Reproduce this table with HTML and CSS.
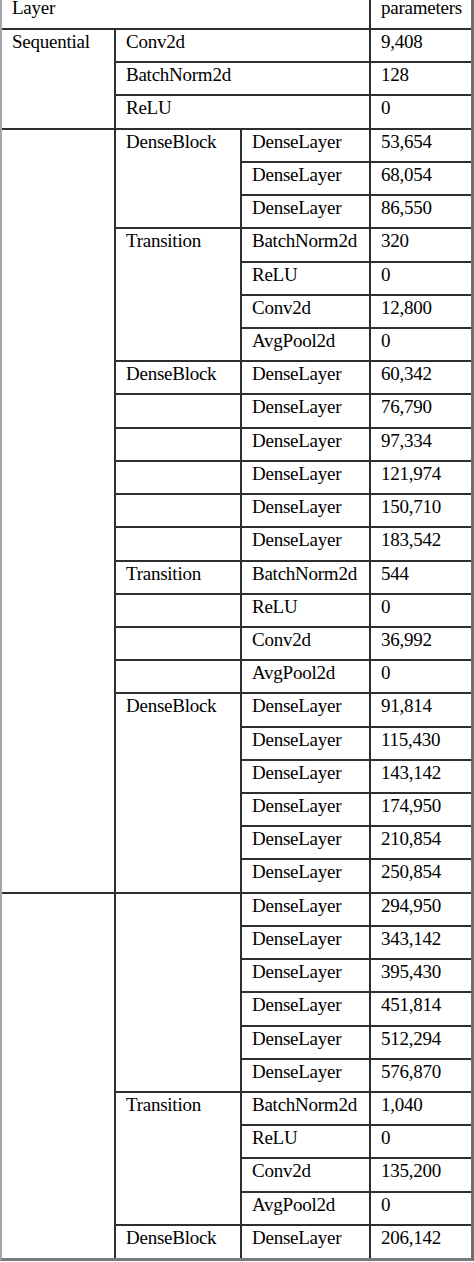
FILE: index.html
```html
<!DOCTYPE html>
<html>
<head>
<meta charset="utf-8">
<link rel="stylesheet" href="styles.css">
</head>
<body>
<div class="frame">
<table class="layers">
<colgroup><col class="c1"><col class="c2"><col class="c3"><col class="c4"></colgroup>
<tr class="head"><td colspan="3">Layer</td><td>parameters</td></tr>
<tr><td rowspan="3">Sequential</td><td colspan="2">Conv2d</td><td>9,408</td></tr>
<tr><td colspan="2">BatchNorm2d</td><td>128</td></tr>
<tr><td colspan="2">ReLU</td><td>0</td></tr>
<tr><td rowspan="23"></td><td rowspan="3">DenseBlock</td><td>DenseLayer</td><td>53,654</td></tr>
<tr><td>DenseLayer</td><td>68,054</td></tr>
<tr><td>DenseLayer</td><td>86,550</td></tr>
<tr><td rowspan="4">Transition</td><td>BatchNorm2d</td><td>320</td></tr>
<tr><td>ReLU</td><td>0</td></tr>
<tr><td>Conv2d</td><td>12,800</td></tr>
<tr><td>AvgPool2d</td><td>0</td></tr>
<tr><td>DenseBlock</td><td>DenseLayer</td><td>60,342</td></tr>
<tr><td></td><td>DenseLayer</td><td>76,790</td></tr>
<tr><td></td><td>DenseLayer</td><td>97,334</td></tr>
<tr><td></td><td>DenseLayer</td><td>121,974</td></tr>
<tr><td></td><td>DenseLayer</td><td>150,710</td></tr>
<tr><td></td><td>DenseLayer</td><td>183,542</td></tr>
<tr><td>Transition</td><td>BatchNorm2d</td><td>544</td></tr>
<tr><td></td><td>ReLU</td><td>0</td></tr>
<tr><td></td><td>Conv2d</td><td>36,992</td></tr>
<tr><td></td><td>AvgPool2d</td><td>0</td></tr>
<tr><td rowspan="6">DenseBlock</td><td>DenseLayer</td><td>91,814</td></tr>
<tr><td>DenseLayer</td><td>115,430</td></tr>
<tr><td>DenseLayer</td><td>143,142</td></tr>
<tr><td>DenseLayer</td><td>174,950</td></tr>
<tr><td>DenseLayer</td><td>210,854</td></tr>
<tr><td>DenseLayer</td><td>250,854</td></tr>
<tr><td rowspan="11"></td><td rowspan="6"></td><td>DenseLayer</td><td>294,950</td></tr>
<tr><td>DenseLayer</td><td>343,142</td></tr>
<tr><td>DenseLayer</td><td>395,430</td></tr>
<tr><td>DenseLayer</td><td>451,814</td></tr>
<tr><td>DenseLayer</td><td>512,294</td></tr>
<tr><td>DenseLayer</td><td>576,870</td></tr>
<tr><td rowspan="4">Transition</td><td>BatchNorm2d</td><td>1,040</td></tr>
<tr><td>ReLU</td><td>0</td></tr>
<tr><td>Conv2d</td><td>135,200</td></tr>
<tr><td>AvgPool2d</td><td>0</td></tr>
<tr><td>DenseBlock</td><td>DenseLayer</td><td>206,142</td></tr>
</table>
</div>
</body>
</html>
```
FILE: styles.css
```css
html, body {
  margin: 0;
  padding: 0;
  background: #ffffff;
}

.frame {
  width: 469px;
  border-left: 2px solid #a6a6a6;
  border-right: 3px solid #6f6f6f;
  border-bottom: 3px solid #7a7a7a;
}

.layers {
  width: 469px;
  table-layout: fixed;
  border-collapse: collapse;
  border-style: hidden;
  font-family: "Liberation Serif", "Times New Roman", serif;
  font-size: 19px;
  letter-spacing: -0.25px;
  line-height: 21px;
  color: #000000;
}

.c1 { width: 113px; }
.c2 { width: 126px; }
.c3 { width: 129px; }
.c4 { width: 101px; }

.layers td {
  border: 2px solid #2e2e2e;
  padding: 1px 0 0 10px;
  vertical-align: top;
  white-space: nowrap;
}

.layers tr {
  height: 33.23px;
}

.layers tr.head {
  height: 29px;
}

.layers tr.head td {
  line-height: 14px;
  padding-top: 1px;
}
```
